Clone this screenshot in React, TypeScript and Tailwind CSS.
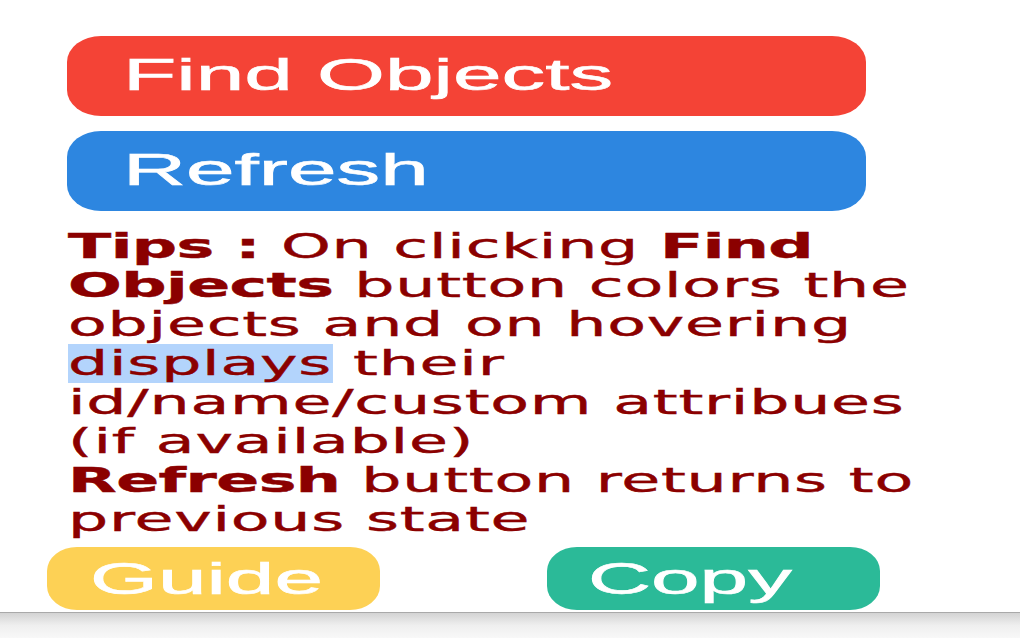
import React from 'react';

const btnFont = { fontFamily: '"Liberation Sans", Arial, sans-serif' };

const PillButton: React.FC<{ label: string; className: string }> = ({ label, className }) => (
  <button className={`flex items-center text-white ${className}`} style={btnFont}>
    <span className="inline-block origin-left scale-x-[1.94] leading-none text-[45px] [-webkit-text-stroke:0.6px_white]">
      {label}
    </span>
  </button>
);

export default function App() {
  return (
    <div className="w-[1020px] h-[638px] bg-white flex flex-col overflow-hidden">
      <div className="h-[612px] flex flex-col pt-[36px]">
        <PillButton
          label="Find Objects"
          className="ml-[67px] w-[799px] h-[80px] rounded-[34px/26px] bg-[#f44336] pl-[56px] pb-[4px]"
        />
        <PillButton
          label="Refresh"
          className="ml-[67px] mt-[15px] w-[799px] h-[80px] rounded-[34px/26px] bg-[#2d86e0] pl-[56px] pb-[4px]"
        />

        <div
          className="ml-[68px] mt-[16px] origin-left scale-x-[1.92] whitespace-nowrap text-[33px] leading-[39px] tracking-[0.4px] text-[#8b0000] [-webkit-text-stroke:0.4px_#8b0000] [&_b]:tracking-[-0.3px]"
          style={{ fontFamily: '"DejaVu Sans", Verdana, sans-serif' }}
        >
          <b>Tips :</b> On clicking <b>Find</b>
          <br />
          <b>Objects</b> button colors the
          <br />
          objects and on hovering
          <br />
          <span className="bg-[#b3d4fc]">displays</span> their
          <br />
          id/name/custom attribues
          <br />
          (if available)
          <br />
          <b>Refresh</b> button returns to
          <br />
          previous state
        </div>

        <div className="flex mt-[8px]">
          <PillButton
            label="Guide"
            className="ml-[47px] w-[333px] h-[63px] rounded-[30px/24px] bg-[#fdd155] pl-[43px]"
          />
          <PillButton
            label="Copy"
            className="ml-[167px] w-[333px] h-[63px] rounded-[30px/24px] bg-[#2bba98] pl-[41px]"
          />
        </div>
      </div>
      <div className="flex-1 border-t border-[#a9a9a9] bg-linear-to-b from-[#d3d3d3] via-[#efefef] to-[#f8f8f8]" />
    </div>
  );
}
